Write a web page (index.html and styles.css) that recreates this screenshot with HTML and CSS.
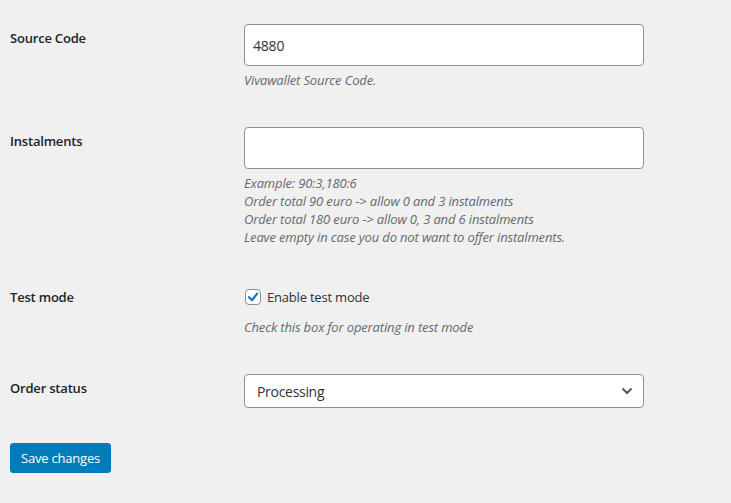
FILE: index.html
```html
<!DOCTYPE html>
<html lang="en">
<head>
<meta charset="utf-8">
<title>Vivawallet settings</title>
<link rel="stylesheet" href="styles.css">
</head>
<body>
<form class="settings">
  <div class="row row-source">
    <label class="label" for="source">Source Code</label>
    <div class="field">
      <input id="source" class="text-input" type="text" value="4880">
      <p class="description">Vivawallet Source Code.</p>
    </div>
  </div>
  <div class="row row-instal">
    <label class="label" for="instal">Instalments</label>
    <div class="field">
      <input id="instal" class="text-input" type="text" value="">
      <p class="description">Example: 90:3,180:6<br>Order total 90 euro -&gt; allow 0 and 3 instalments<br>Order total 180 euro -&gt; allow 0, 3 and 6 instalments<br>Leave empty in case you do not want to offer instalments.</p>
    </div>
  </div>
  <div class="row row-test">
    <span class="label">Test mode</span>
    <div class="field">
      <label class="check-line">
        <span class="checkbox"><svg width="14" height="14" viewBox="0 0 14 14"><path d="M3 7.2 L6 10.2 L11.2 3.6" fill="none" stroke="#2271b1" stroke-width="2.2" stroke-linecap="round" stroke-linejoin="round"/></svg></span>
        <span>Enable test mode</span>
      </label>
      <p class="description desc-check">Check this box for operating in test mode</p>
    </div>
  </div>
  <div class="row row-status">
    <label class="label" for="status">Order status</label>
    <div class="field">
      <div class="select">
        <span>Processing</span>
        <svg class="chevron" width="12" height="8" viewBox="0 0 12 8"><path d="M1.5 1.5 L6 6 L10.5 1.5" fill="none" stroke="#50575e" stroke-width="2"/></svg>
      </div>
    </div>
  </div>
  <div class="actions">
    <button type="button" class="button-primary">Save changes</button>
  </div>
</form>
</body>
</html>
```
FILE: styles.css
```css
html, body {
  margin: 0;
  padding: 0;
  background: #f0f0f0;
}
body {
  font-family: "Open Sans", "Noto Sans", sans-serif;
  color: #1d2327;
  font-size: 13px;
}
.settings {
  padding: 24px 0 0 10px;
}
.row {
  display: grid;
  grid-template-columns: 234px 400px;
  align-items: start;
}
.label {
  font-size: 13px;
  font-weight: 600;
  line-height: 20px;
  color: #1d2327;
  letter-spacing: -0.2px;
}
.row-source .label,
.row-instal .label {
  margin-top: 4px;
}
.row-instal { margin-top: 38px; }
.row-test { margin-top: 41px; }
.row-status { margin-top: 38px; }
.row-status .label { margin-top: 4px; }
.text-input {
  box-sizing: border-box;
  display: block;
  width: 400px;
  height: 42px;
  margin: 0;
  padding: 0 8px;
  border: 1px solid #8c8f94;
  border-radius: 4px;
  background: #fff;
  font-family: inherit;
  font-size: 14px;
  color: #2c3338;
  letter-spacing: -0.2px;
}
.description {
  margin: 5px 0 0;
  font-style: italic;
  font-size: 13px;
  line-height: 18px;
  color: #646970;
  letter-spacing: -0.15px;
}
.check-line {
  display: flex;
  align-items: center;
  height: 20px;
  font-size: 13px;
  color: #2c3338;
  letter-spacing: -0.2px;
}
.checkbox {
  box-sizing: border-box;
  width: 16px;
  height: 16px;
  margin: 0 6px 0 1px;
  border: 1px solid #8c8f94;
  border-radius: 4px;
  background: #fff;
  display: flex;
  align-items: center;
  justify-content: center;
}
.desc-check { margin-top: 11px; }
.select {
  box-sizing: border-box;
  width: 400px;
  height: 34px;
  padding: 0 10px 0 12px;
  border: 1px solid #8c8f94;
  border-radius: 4px;
  background: #fff;
  display: flex;
  align-items: center;
  justify-content: space-between;
  font-size: 14px;
  color: #2c3338;
  letter-spacing: -0.3px;
}
.actions {
  margin-top: 35px;
}
.button-primary {
  box-sizing: border-box;
  height: 30px;
  padding: 0 10px;
  border: 1px solid #007cba;
  border-radius: 3px;
  background: #007cba;
  color: #fff;
  font-family: inherit;
  font-size: 13px;
  letter-spacing: -0.2px;
  cursor: pointer;
}
```
